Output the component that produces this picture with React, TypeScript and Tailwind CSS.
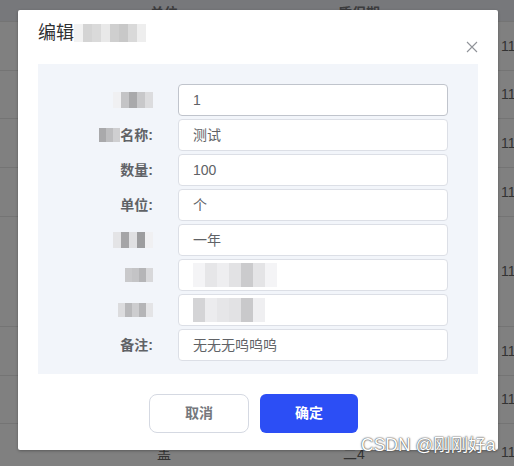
import React from 'react';

const font = "font-['Liberation_Sans','Noto_Sans_CJK_SC',sans-serif]";

function Mosaic({ cells, size = 7 }: { cells: string[]; size?: number }) {
  return (
    <span className="inline-flex blur-[0.6px]">
      {cells.map((c, i) => (
        <span key={i} style={{ backgroundColor: c, width: size, height: size * 2 }} />
      ))}
    </span>
  );
}

const rows: { label: React.ReactNode; value: React.ReactNode; active?: boolean }[] = [
  {
    label: <Mosaic cells={['#f0f0f2', '#c4c4c6', '#a9a9ab', '#c8c8ca', '#dcdcde']} size={8} />,
    value: '1',
    active: true,
  },
  {
    label: (
      <span className="flex items-center">
        <Mosaic cells={['#a9a9ab', '#bdbdbf', '#cfcfd1']} size={7} />
        <span>名称:</span>
      </span>
    ),
    value: '测试',
  },
  { label: '数量:', value: '100' },
  { label: '单位:', value: '个' },
  { label: <Mosaic cells={['#e4e4e6', '#a5a5a7', '#e0e0e2', '#9d9d9f', '#f0f0f2']} size={8} />, value: '一年' },
  {
    label: <Mosaic cells={['#c9c9cb', '#c4c4c6', '#b5b5b7', '#d8d8da']} size={7} />,
    value: <Mosaic cells={['#f4f4f6', '#e6e6e8', '#eeeef0', '#e2e2e4', '#cbcbcd', '#e4e4e6', '#f4f4f6']} size={12} />,
  },
  {
    label: <Mosaic cells={['#dcdcde', '#b9b9bb', '#cdcdcf', '#b5b5b7', '#e4e4e6']} size={7} />,
    value: <Mosaic cells={['#d4d4d6', '#ececee', '#e6e6e8', '#e2e2e4', '#c9c9cb', '#efeff1']} size={12} />,
  },
  { label: '备注:', value: '无无无呜呜呜' },
];

const tableRows = [49, 48, 49, 49, 110, 49, 48];

export default function App() {
  return (
    <div className={`relative h-[466px] w-[514px] overflow-hidden bg-[#808080] ${font}`}>
      {/* table behind the mask */}
      <div className="flex h-[22px] items-end border-b border-[#747474] bg-[#77787b] text-[14px] font-bold text-[#3c3c3e]">
        <span className="ml-[150px] leading-[16px]">单位</span>
        <span className="ml-[160px] leading-[16px]">质保期</span>
      </div>
      {tableRows.map((h, i) => (
        <div
          key={i}
          style={{ height: h }}
          className="flex items-center justify-end border-b border-[#747474] text-[14px] text-[#333]"
        >
          <span className="w-[13px] overflow-hidden whitespace-nowrap">11</span>
        </div>
      ))}
      <div className="flex h-[42px] items-center text-[14px] text-[#333]">
        <span className="ml-[157px] pt-[18px]">盖</span>
        <span className="ml-[172px] pt-[18px]">二4</span>
        <span className="ml-auto w-[13px] overflow-hidden whitespace-nowrap pt-[14px]">11</span>
      </div>

      {/* dialog */}
      <div className="absolute left-[18px] top-[10px] flex h-[440px] w-[480px] flex-col rounded-[2px] bg-white shadow-[0_1px_3px_rgba(0,0,0,0.3)]">
        <div className="flex h-[54px] items-start justify-between px-[20px] pt-[11px]">
          <div className="flex items-center text-[18px] leading-[24px] text-[#303133]">
            <span>编辑</span>
            <Mosaic cells={['#f2f2f2', '#d4d4d4', '#dadada', '#e9e9e9', '#cfcfcf', '#c8c8c8', '#d9d9d9', '#eeeeee']} size={9} />
          </div>
          <svg className="mt-[20px]" width="12" height="12" viewBox="0 0 12 12" fill="none" stroke="#909399" strokeWidth="1.1">
            <path d="M1 1l10 10M11 1L1 11" />
          </svg>
        </div>

        <div className="mx-[20px] flex h-[310px] flex-col gap-[3px] bg-[#f2f5fa] pt-[20px]">
          {rows.map((r, i) => (
            <div key={i} className="flex h-[32px] items-center">
              <div className="flex w-[115px] justify-end text-[14px] font-semibold text-[#606266]">{r.label}</div>
              <div
                className={`ml-[25px] flex h-[32px] w-[270px] items-center rounded-[4px] border bg-white pl-[14px] text-[14px] text-[#606266] ${
                  r.active ? 'border-[#c0c4cc]' : 'border-[#dcdfe6]'
                }`}
              >
                {r.value}
              </div>
            </div>
          ))}
        </div>

        <div className="flex gap-[11px] pl-[131px] pt-[20px]">
          <button className="flex h-[39px] w-[100px] items-center justify-center rounded-[8px] border border-[#d5d9e2] bg-white text-[14px] font-bold text-[#75777d]">
            取消
          </button>
          <button className="flex h-[39px] w-[98px] items-center justify-center rounded-[6px] bg-[#2c4ef5] text-[14px] font-bold text-white">
            确定
          </button>
        </div>
      </div>

      {/* watermark */}
      <div className="absolute left-[361px] top-[434px] whitespace-nowrap text-[17.5px] leading-[22px] text-white [text-shadow:0_0_2px_#444,0_0_1px_#444]">
        CSDN @刚刚好a
      </div>
    </div>
  );
}
